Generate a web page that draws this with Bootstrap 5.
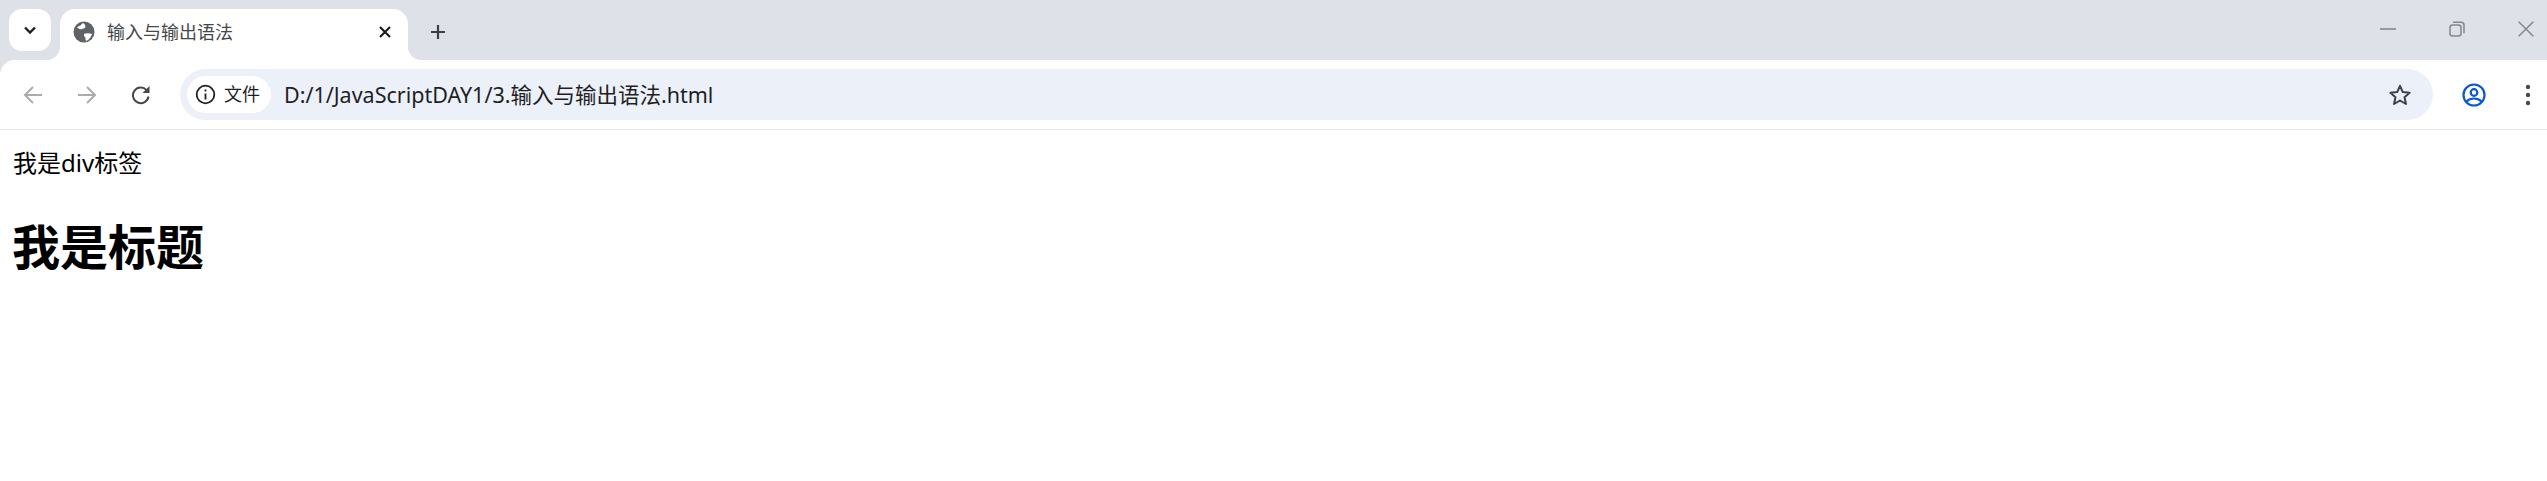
<!DOCTYPE html>
<html lang="zh">
<head>
<meta charset="utf-8">
<title>输入与输出语法</title>
<link href="https://cdn.jsdelivr.net/npm/bootstrap@5.3.0/dist/css/bootstrap.min.css" rel="stylesheet">
<style>
html,body{height:100%;background:#fff;overflow:hidden}
body{font-family:"Noto Sans","Noto Sans CJK SC",sans-serif;color:#000}
.tabstrip{height:60px;background:#dee1e8;padding:9px 0 0 9px}
.tabmenu{width:42px;height:42px;background:#fff;border-radius:13px}
.browsertab{width:348px;height:51px;margin-left:9px;background:#fff;border-radius:15px 15px 0 0;padding:0 15px 6px 13px;position:relative}
.browsertab::before,.browsertab::after{content:"";position:absolute;bottom:0;width:14px;height:14px}
.browsertab::before{left:-14px;background:radial-gradient(circle at 0 0,transparent 14px,#fff 14.5px)}
.browsertab::after{right:-14px;background:radial-gradient(circle at 100% 0,transparent 14px,#fff 14.5px)}
.tabname{font-size:18px;color:#45474a;margin-left:12px;line-height:24px}
.plusbtn{margin-left:16px;margin-bottom:6px;width:28px;height:28px}
.winctrls{margin-left:auto;gap:53px;padding-right:13px;margin-bottom:12px}
.toolbar{height:69px;background:#fff;border-radius:15px 0 0 0;padding:0 13px 0 23px}
.toolbar-line{height:1px;background:#e3e4e6}
.navicons{gap:34px;width:157px}
.omnibox{height:51px;width:2253px;background:#ebf0f9;border-radius:26px;padding:0 21px 0 7px}
.chip{height:37px;width:84px;background:#fff;border-radius:19px;padding-left:8px;font-size:18px;color:#1f1f1f;gap:8px}
.urltext{font-size:21.5px;color:#1f1f1f;margin-left:13px;line-height:28px}
.rightbar{gap:39px;margin-left:29px}
.chromewrap{background:#dee1e8}
.pagebody{padding:16px 13px 12px}
.divtext{font-size:24px;line-height:34px}
.pagehead{font-size:48px;font-weight:700;line-height:65px;margin:32px 0 0 -1px;font-family:"Noto Sans CJK SC","Noto Sans",sans-serif}
</style>
</head>
<body>
<div class="chromewrap">
<div class="tabstrip d-flex align-items-start">
  <div class="tabmenu d-flex align-items-center justify-content-center flex-shrink-0">
    <svg width="16" height="16" viewBox="0 0 16 16"><path d="M3 5.500l5 5 5-5" fill="none" stroke="#1f1f1f" stroke-width="2.400"/></svg>
  </div>
  <div class="browsertab d-flex align-items-center flex-shrink-0">
    <svg width="22" height="22" viewBox="0 0 22 22"><circle cx="11" cy="11" r="10.500" fill="#5f6368"/><path d="M4 6c3-1 4-2 6-4 2 1 3 3 2 5-2 0-3 2-5 1-1 0-2-1-3-2zM11 13c2-1 5-1 8 0-1 3-3 6-6 7-1-2 0-3-1-4-1 0-1-2-1-3z" fill="#fff"/></svg>
    <span class="tabname">输入与输出语法</span>
    <svg class="ms-auto" width="16" height="16" viewBox="0 0 16 16"><path d="M3 3l10 10M13 3L3 13" stroke="#1f1f1f" stroke-width="2.200"/></svg>
  </div>
  <div class="plusbtn d-flex align-items-center justify-content-center flex-shrink-0 align-self-center">
    <svg width="18" height="18" viewBox="0 0 18 18"><path d="M9 2v14M2 9h14" stroke="#3d4043" stroke-width="2.200"/></svg>
  </div>
  <div class="winctrls d-flex align-items-center align-self-center">
    <svg width="16" height="16" viewBox="0 0 16 16"><path d="M0 8h16" stroke="#85878b" stroke-width="1.600"/></svg>
    <svg width="16" height="16" viewBox="0 0 16 16" fill="none" stroke="#85878b" stroke-width="1.500"><rect x="1" y="4" width="11" height="11" rx="2.500"/><path d="M4 1.200h8a3 3 0 0 1 3 3v8"/></svg>
    <svg width="16" height="16" viewBox="0 0 16 16"><path d="M.7.7l14.600 14.600M15.300.7L.7 15.300" stroke="#85878b" stroke-width="1.500"/></svg>
  </div>
</div>
<div class="toolbar d-flex align-items-center">
  <div class="navicons d-flex align-items-center flex-shrink-0">
    <svg width="20" height="20" viewBox="0 0 20 20" fill="none" stroke="#a9abae" stroke-width="2"><path d="M19 10H2M10 2l-8 8 8 8"/></svg>
    <svg width="20" height="20" viewBox="0 0 20 20" fill="none" stroke="#a9abae" stroke-width="2"><path d="M1 10h17M10 2l8 8-8 8"/></svg>
    <svg width="20" height="20" viewBox="0 0 20 20" fill="none" stroke="#47494c" stroke-width="2"><path d="M17.500 11.500a7.800 7.800 0 1 1-1.900-6.400"/><path d="M18.500 1v7h-7" fill="#47494c" stroke="none"/></svg>
  </div>
  <div class="omnibox d-flex align-items-center flex-shrink-0">
    <div class="chip d-flex align-items-center flex-shrink-0">
      <svg width="21" height="21" viewBox="0 0 21 21" fill="none" stroke="#1f1f1f" stroke-width="1.800"><circle cx="10.500" cy="10.500" r="8.800"/><path d="M10.500 9.500v6M10.500 5.500v2"/></svg>
      <span>文件</span>
    </div>
    <span class="urltext">D:/1/JavaScriptDAY1/3.输入与输出语法.html</span>
    <svg class="ms-auto" width="24" height="24" viewBox="0 0 24 24" fill="none" stroke="#3f4144" stroke-width="2"><path d="M12 2.800l2.800 6.300 6.800.7-5.100 4.500 1.500 6.700-6-3.500-6 3.500 1.500-6.700-5.100-4.500 6.800-.7z" stroke-linejoin="round"/></svg>
  </div>
  <div class="rightbar d-flex align-items-center">
    <svg width="24" height="24" viewBox="0 0 24 24" fill="none" stroke="#0b57d0" stroke-width="2.200"><circle cx="12" cy="12" r="10.500"/><circle cx="12" cy="9.500" r="3.300"/><path d="M4.500 18.500c4-4 11-4 15 0"/></svg>
    <svg width="6" height="24" viewBox="0 0 6 24" fill="#47494c"><circle cx="3" cy="4" r="2.200"/><circle cx="3" cy="12" r="2.200"/><circle cx="3" cy="20" r="2.200"/></svg>
  </div>
</div>
</div>
<div class="toolbar-line"></div>
<div class="pagebody">
  <div class="divtext">我是div标签</div>
  <h1 class="pagehead">我是标题</h1>
</div>
<script src="https://cdn.jsdelivr.net/npm/bootstrap@5.3.0/dist/js/bootstrap.bundle.min.js"></script>
</body>
</html>
